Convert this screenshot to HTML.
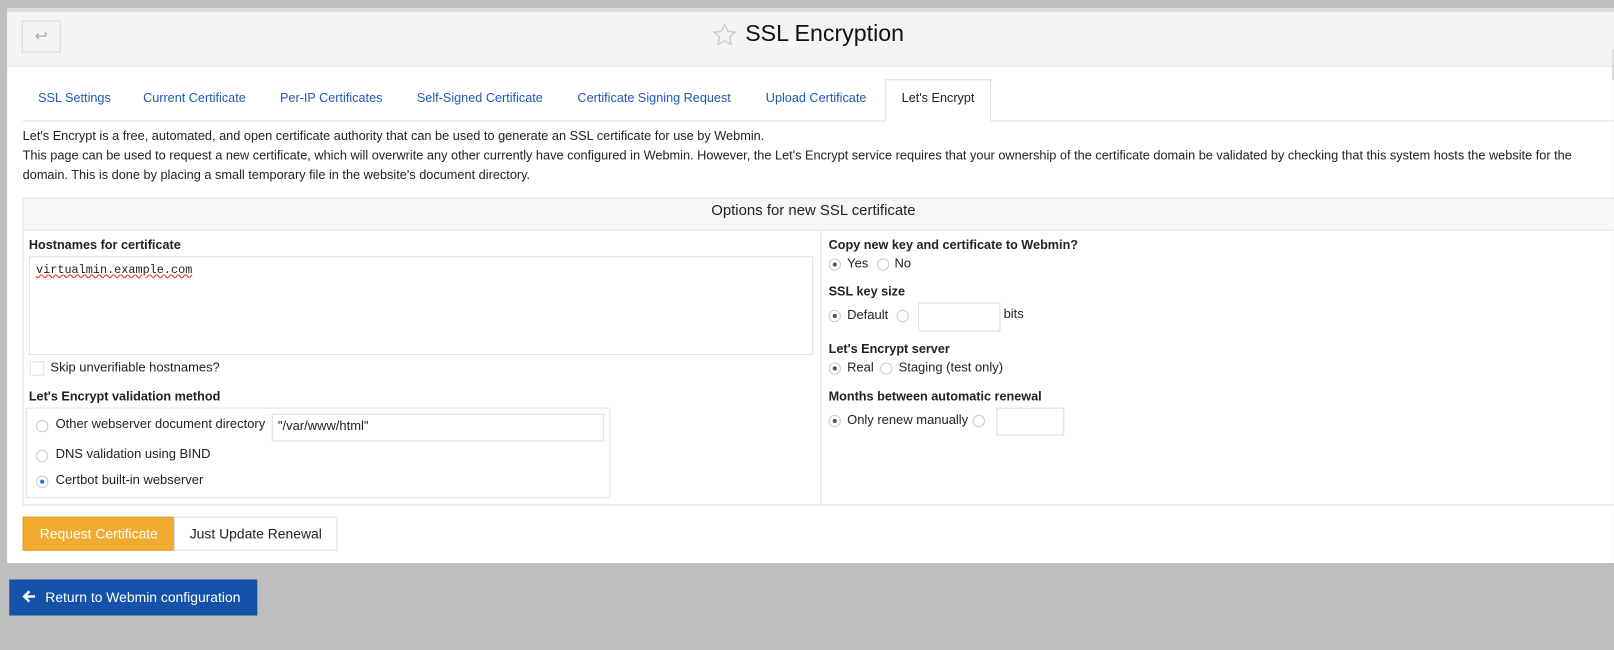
<!DOCTYPE html>
<html><head><meta charset="utf-8"><style>
*{box-sizing:border-box;margin:0;padding:0}
body{width:1614px;height:649px;background:#bebebe;font-family:"Liberation Sans",sans-serif;font-size:12.6px;color:#222;position:relative;overflow:hidden}
#w{position:absolute;left:0;top:0;width:1568px;height:631px;transform:scale(1.0293);transform-origin:0 0}
.a{position:absolute;white-space:nowrap}
.panel{position:absolute;left:7px;top:8px;width:1561px;height:539px;background:#fff;border-top:4px solid #dcdcdc}
.hdr{position:absolute;left:7px;top:12px;width:1561px;height:53px;background:#f4f4f4;border-bottom:1px solid #e6e6e6}
.tab{position:absolute;top:88px;color:#1e5ab4;font-size:12.3px}
.b{font-weight:bold;font-size:12.3px}
.r{position:absolute;width:12px;height:12px;border:1px solid #ccc;border-radius:50%;background:#fff}
.r.on::after{content:"";position:absolute;left:3px;top:3px;width:4px;height:4px;border-radius:50%;background:#555}
.r.blue::after{background:#1a6fe0}
.in{position:absolute;border:1px solid #ddd;background:#fff}
</style></head><body><div id="w">
<div class="panel"></div>
<div class="hdr"></div>
<div class="a" style="left:21px;top:20px;width:38px;height:31px;border:1px solid #d6d6d6;color:#aaa;text-align:center;line-height:29px;font-size:15px">↩</div>
<svg class="a" style="left:691px;top:21px" width="26" height="26" viewBox="0 0 24 24"><path d="M12 2.5l2.9 6.2 6.6.7-5 4.5 1.4 6.6L12 17.2 6.1 20.5l1.4-6.6-5-4.5 6.6-.7z" fill="none" stroke="#ccc" stroke-width="1.3"/></svg>
<div class="a" style="left:724px;top:20px;font-size:22.5px;color:#111">SSL Encryption</div>
<div class="a" style="left:1566px;top:48px;width:2px;height:30px;background:#ddd"></div>
<div class="a" style="left:22px;top:117px;width:1546px;height:1px;background:#e2e2e2"></div>
<div class="a" style="left:860px;top:77px;width:103px;height:41px;border:1px solid #ddd;border-bottom:1px solid #fff;background:#fff"></div>
<div class="tab a" style="left:37px">SSL Settings</div>
<div class="tab a" style="left:139px">Current Certificate</div>
<div class="tab a" style="left:272px">Per-IP Certificates</div>
<div class="tab a" style="left:405px">Self-Signed Certificate</div>
<div class="tab a" style="left:561px">Certificate Signing Request</div>
<div class="tab a" style="left:744px">Upload Certificate</div>
<div class="tab a" style="left:876px;color:#222">Let's Encrypt</div>
<div class="a" style="left:22px;top:123px;line-height:19px;font-size:12.38px">Let's Encrypt is a free, automated, and open certificate authority that can be used to generate an SSL certificate for use by Webmin.<br>This page can be used to request a new certificate, which will overwrite any other currently have configured in Webmin. However, the Let's Encrypt service requires that your ownership of the certificate domain be validated by checking that this system hosts the website for the<br>domain. This is done by placing a small temporary file in the website's document directory.</div>
<div class="a" style="left:22px;top:192px;width:1560px;height:299px;border:1px solid #e2e2e2"></div>
<div class="a" style="left:23px;top:193px;width:1550px;height:31px;background:#f7f7f7;border-bottom:1px solid #e2e2e2"></div>
<div class="a" style="left:691px;top:197px;font-size:14.5px">Options for new SSL certificate</div>
<div class="a" style="left:797px;top:224px;width:1px;height:266px;background:#e2e2e2"></div>
<div class="a b" style="left:28px;top:231px">Hostnames for certificate</div>
<div class="in" style="left:28px;top:249px;width:762px;height:96px"></div>
<div class="a" style="left:35px;top:256px;font-family:'Liberation Mono',monospace;font-size:11.5px;text-decoration:underline wavy #e33;text-decoration-thickness:1px">virtualmin.example.com</div>
<div class="a" style="left:29px;top:351px;width:14px;height:14px;border:1px solid #ddd"></div>
<div class="a" style="left:49px;top:350px">Skip unverifiable hostnames?</div>
<div class="a b" style="left:28px;top:378px">Let's Encrypt validation method</div>
<div class="a" style="left:25px;top:396px;width:568px;height:88px;border:1px solid #e2e2e2"></div>
<div class="r" style="left:35px;top:408px"></div><div class="a" style="left:54px;top:405px">Other webserver document directory</div>
<div class="in" style="left:264px;top:402px;width:323px;height:27px"></div><div class="a" style="left:270px;top:407px">"/var/www/html"</div>
<div class="r" style="left:35px;top:437px"></div><div class="a" style="left:54px;top:434px">DNS validation using BIND</div>
<div class="r on blue" style="left:35px;top:462px"></div><div class="a" style="left:54px;top:459px">Certbot built-in webserver</div>
<div class="a b" style="left:805px;top:231px">Copy new key and certificate to Webmin?</div>
<div class="r on" style="left:805px;top:251px"></div><div class="a" style="left:823px;top:249px">Yes</div>
<div class="r" style="left:852px;top:251px"></div><div class="a" style="left:869px;top:249px">No</div>
<div class="a b" style="left:805px;top:276px">SSL key size</div>
<div class="r on" style="left:805px;top:301px"></div><div class="a" style="left:823px;top:299px">Default</div>
<div class="r" style="left:871px;top:301px"></div>
<div class="in" style="left:892px;top:294px;width:80px;height:28px"></div><div class="a" style="left:975px;top:298px">bits</div>
<div class="a b" style="left:805px;top:332px">Let's Encrypt server</div>
<div class="r on" style="left:805px;top:352px"></div><div class="a" style="left:823px;top:350px">Real</div>
<div class="r" style="left:855px;top:352px"></div><div class="a" style="left:873px;top:350px">Staging (test only)</div>
<div class="a b" style="left:805px;top:378px">Months between automatic renewal</div>
<div class="r on" style="left:805px;top:403px"></div><div class="a" style="left:823px;top:401px">Only renew manually</div>
<div class="r" style="left:945px;top:403px"></div>
<div class="in" style="left:968px;top:396px;width:66px;height:27px"></div>
<div class="a" style="left:22px;top:502px;width:148px;height:33px;background:#f0ab30;border:1px solid #e29d22;color:#fff;font-size:13.5px;text-align:center;line-height:31px">Request Certificate</div>
<div class="a" style="left:169px;top:502px;width:159px;height:33px;background:#fff;border:1px solid #ddd;color:#222;font-size:13.5px;text-align:center;line-height:31px">Just Update Renewal</div>
<div class="a" style="left:9px;top:563px;width:241px;height:35px;background:#1452aa;color:#fff;font-size:13.5px;line-height:35px;padding-left:35px">Return to Webmin configuration</div>
<svg class="a" style="left:22px;top:573px" width="13" height="13" viewBox="0 0 13 13"><path d="M6.5 1.5L1.5 6.5l5 5M2 6.5h10" stroke="#fff" stroke-width="2.4" fill="none"/></svg>
</div></body></html>
